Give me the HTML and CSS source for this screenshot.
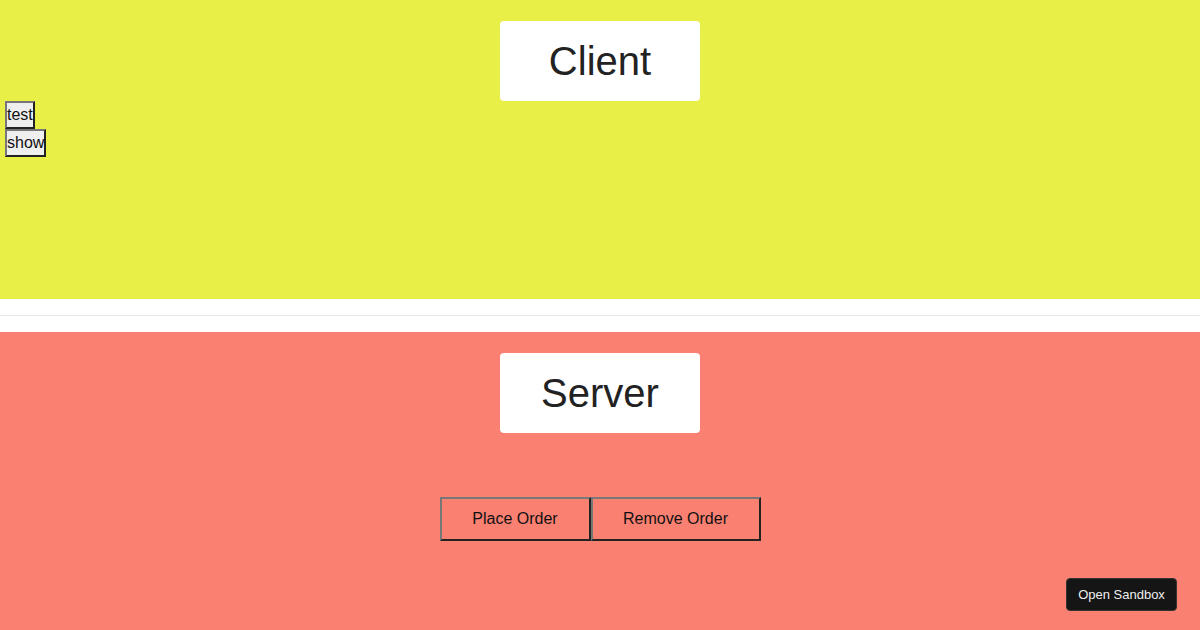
FILE: index.html
```
<!DOCTYPE html>
<html>
<head>
<meta charset="utf-8">
<link rel="stylesheet" href="styles.css">
</head>
<body>
<section class="panel client">
  <div class="title">Client</div>
  <button class="raw">test</button>
  <button class="raw">show</button>
</section>
<div class="sep"><div class="line"></div></div>
<section class="panel server">
  <div class="title">Server</div>
  <div class="actions">
    <button class="order">Place Order</button><button class="order">Remove Order</button>
  </div>
</section>
<a class="sandbox">Open Sandbox</a>
</body>
</html>
```
FILE: styles.css
```
html, body { margin: 0; padding: 0; }
body {
  font-family: "Liberation Sans", Arial, sans-serif;
  width: 1200px;
  height: 630px;
  overflow: hidden;
  background: #fff;
}
.panel {
  box-sizing: border-box;
  padding: 21px 0 0;
}
.client {
  height: 299px;
  background: #e8f048;
}
.server {
  height: 298px;
  background: #fa8072;
}
.title {
  width: 200px;
  height: 80px;
  margin: 0 auto;
  background: #fff;
  border-radius: 4px;
  display: flex;
  align-items: center;
  justify-content: center;
  font-size: 40px;
  color: #222;
}
.raw {
  display: block;
  margin: 0 0 0 5px;
  padding: 0;
  height: 28px;
  font-family: "Liberation Sans", Arial, sans-serif;
  font-size: 16px;
  color: #111;
  background: #efefef;
  border: 2px outset #767676;
  border-color: #777 #222 #222 #777;
  border-style: solid;
}
.sep {
  height: 33px;
  display: flex;
  align-items: center;
}
.line {
  width: 100%;
  height: 1px;
  margin-top: 0;
  background: #e8e8e8;
}
.actions {
  display: flex;
  justify-content: center;
  margin-top: 64px;
}
.order {
  box-sizing: border-box;
  height: 44px;
  padding: 0 30px;
  font-family: "Liberation Sans", Arial, sans-serif;
  font-size: 16px;
  color: #111;
  background: transparent;
  border: 2px solid;
  border-color: #777 #222 #222 #777;
}
.order:first-child { width: 151px; }
.order:last-child { width: 170px; }
.sandbox {
  position: fixed;
  right: 23px;
  bottom: 19px;
  width: 111px;
  height: 33px;
  display: flex;
  align-items: center;
  justify-content: center;
  background: #151515;
  border: 1px solid #333;
  box-sizing: border-box;
  border-radius: 4px;
  color: #eee;
  font-size: 13px;
}
```
